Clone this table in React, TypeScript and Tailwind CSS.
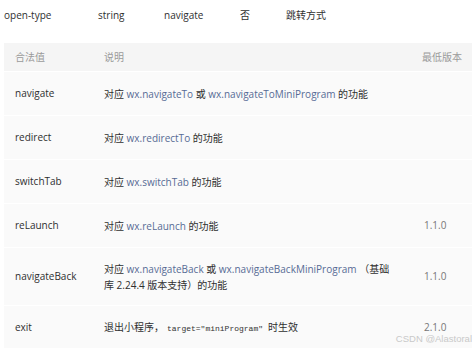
import React from "react";

type Row = {
  value: string;
  desc: React.ReactNode;
  version?: string;
  tall?: boolean;
};

const Link = ({ children }: { children: React.ReactNode }) => (
  <span className="text-[#576b95]">{children}</span>
);

const rows: Row[] = [
  {
    value: "navigate",
    desc: (
      <>
        对应 <Link>wx.navigateTo</Link> 或 <Link>wx.navigateToMiniProgram</Link> 的功能
      </>
    ),
  },
  {
    value: "redirect",
    desc: (
      <>
        对应 <Link>wx.redirectTo</Link> 的功能
      </>
    ),
  },
  {
    value: "switchTab",
    desc: (
      <>
        对应 <Link>wx.switchTab</Link> 的功能
      </>
    ),
  },
  {
    value: "reLaunch",
    desc: (
      <>
        对应 <Link>wx.reLaunch</Link> 的功能
      </>
    ),
    version: "1.1.0",
  },
  {
    value: "navigateBack",
    desc: (
      <>
        对应 <Link>wx.navigateBack</Link> 或 <Link>wx.navigateBackMiniProgram</Link> （基础
        <br />
        库 2.24.4 版本支持）的功能
      </>
    ),
    version: "1.1.0",
    tall: true,
  },
  {
    value: "exit",
    desc: (
      <>
        退出小程序，
        <code className="ml-[3px] mr-[5px] font-['Liberation_Mono',monospace] text-[8px] text-[#333]">
          target="miniProgram"
        </code>
        时生效
      </>
    ),
    version: "2.1.0",
  },
];

export default function App() {
  return (
    <div className="relative h-[348px] w-[474px] overflow-hidden bg-white font-['Open_Sans','Noto_Sans_CJK_SC',sans-serif] text-[10px] text-[#2f2f2f]">
      <div className="flex h-[30px] items-center pl-[4px] pt-[1px]">
        <span className="w-[94px]">open-type</span>
        <span className="w-[66px]">string</span>
        <span className="w-[76px]">navigate</span>
        <span className="w-[46px]">否</span>
        <span>跳转方式</span>
      </div>

      <div className="ml-[4px] mt-[13px] w-[468px] bg-[#fafafa]">
        <div className="grid h-[28px] grid-cols-[89px_320px_1fr] items-center bg-[#f5f5f5] text-[#9a9a9a]">
          <span className="pl-[11px]">合法值</span>
          <span className="pl-[11px]">说明</span>
          <span className="pl-[9px]">最低版本</span>
        </div>
        {rows.map((row) => (
          <div
            key={row.value}
            className={`grid grid-cols-[89px_320px_1fr] items-center border-t border-white ${
              row.tall ? "h-[58px]" : "h-[44px]"
            }`}
          >
            <span className="pl-[11px]">{row.value}</span>
            <span className="pl-[11px] leading-[16px]">{row.desc}</span>
            <span className="pl-[11px] text-[#777]">{row.version}</span>
          </div>
        ))}
      </div>

      <div className="absolute bottom-[2px] right-[2px] font-['Liberation_Sans',sans-serif] text-[9.5px] text-[#c9c9c9]">
        CSDN @Alastoral
      </div>
    </div>
  );
}
